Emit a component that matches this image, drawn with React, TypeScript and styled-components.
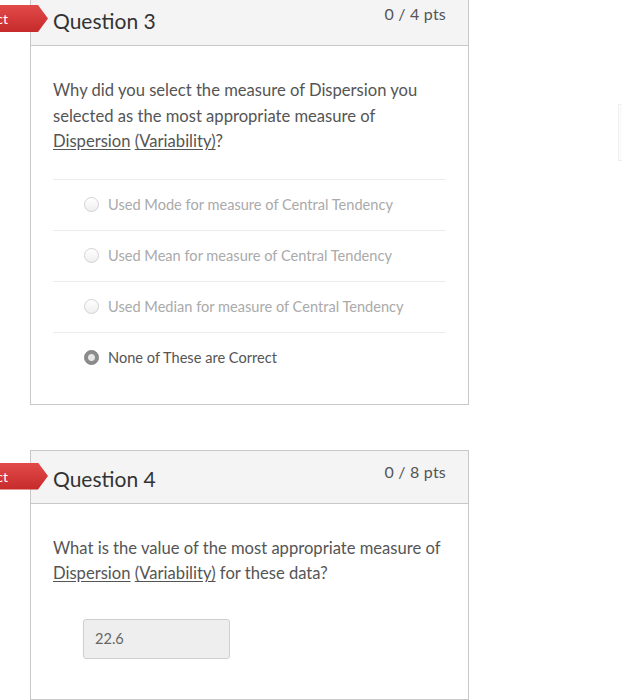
import React from "react";
import styled, { createGlobalStyle } from "styled-components";

const GlobalStyle = createGlobalStyle`
  html, body {
    margin: 0;
    padding: 0;
    background: #fff;
    font-family: Lato, "Open Sans", "Liberation Sans", sans-serif;
    color: #444;
  }
  * {
    box-sizing: border-box;
  }
`;

const Page = styled.div`
  display: flex;
  width: 626px;
  height: 700px;
  overflow: hidden;
`;

const Quiz = styled.div`
  display: flex;
  flex-direction: column;
  gap: 45px;
  margin-top: -8px;
  margin-left: 30px;
  width: 439px;
  flex: none;
`;

const Side = styled.div`
  width: 4px;
  height: 57px;
  margin: 104px 0 0 149px;
  border: 1px solid #f0f0f0;
  border-right: none;
  background: #fbfbfb;
`;

const Card = styled.div`
  position: relative;
  border: 1px solid #c8c8c8;
  background: #fff;
`;

const Header = styled.div`
  display: flex;
  justify-content: space-between;
  align-items: flex-start;
  height: 53px;
  padding: 11px 22px 0 22px;
  background: #f4f4f4;
  border-bottom: 1px solid #c8c8c8;
`;

const Title = styled.h2`
  margin: 4px 0 0 0;
  font-size: 21px;
  line-height: 26px;
  font-weight: 400;
  color: #333;
`;

const Points = styled.div`
  font-size: 16px;
  line-height: 20px;
  color: #555;
  letter-spacing: 0.2px;
`;

const Tag = styled.div`
  position: absolute;
  top: 12px;
  right: calc(100% - 17px);
  height: 27px;
  display: flex;
  align-items: center;
  padding: 0 40px 0 12px;
  font-size: 14px;
  color: #fff;
  background: linear-gradient(#e24a4a, #c62a2a);
  clip-path: polygon(0 0, calc(100% - 10px) 0, 100% 50%, calc(100% - 10px) 100%, 0 100%);
`;

const Body = styled.div<{ $bottom: number }>`
  padding: 32px 22px ${(p) => p.$bottom}px 22px;
`;

const Text = styled.div`
  font-size: 16.6px;
  line-height: 25.5px;
  color: #555;
`;

const Term = styled.span`
  text-decoration: underline;
  text-decoration-color: #555;
  text-underline-offset: 2px;
`;

const Answers = styled.div`
  display: flex;
  flex-direction: column;
  margin-top: 24px;
`;

const Answer = styled.div`
  display: flex;
  align-items: center;
  gap: 9px;
  height: 51px;
  padding-left: 31px;
  border-top: 1px solid #ececec;
`;

const Radio = styled.span<{ $checked?: boolean }>`
  width: 15px;
  height: 15px;
  border-radius: 50%;
  flex: none;
  ${(p) =>
    p.$checked
      ? `background: radial-gradient(circle, #e6e6e6 0 3px, #8c8c8c 4px);
         border: 1px solid #7e7e7e;`
      : `background: linear-gradient(#ffffff, #efefef);
         border: 1px solid #d2d2d2;`}
`;

const Label = styled.span<{ $checked?: boolean }>`
  font-size: 14.6px;
  color: ${(p) => (p.$checked ? "#555" : "#aaa")};
`;

const Field = styled.div`
  margin: 32px 0 0 30px;
  width: 147px;
  height: 40px;
  display: flex;
  align-items: center;
  padding-left: 11px;
  font-size: 14.6px;
  color: #666;
  background: #eeeeee;
  border: 1px solid #cfcfcf;
  border-radius: 3px;
`;

const answers = [
  { label: "Used Mode for measure of Central Tendency", checked: false },
  { label: "Used Mean for measure of Central Tendency", checked: false },
  { label: "Used Median for measure of Central Tendency", checked: false },
  { label: "None of These are Correct", checked: true },
];

export default function App() {
  return (
    <>
      <GlobalStyle />
      <Page>
        <Quiz>
          <Card>
            <Tag>Incorrect</Tag>
            <Header>
              <Title>Question 3</Title>
              <Points>0 / 4 pts</Points>
            </Header>
            <Body $bottom={21}>
              <Text>
                Why did you select the measure of Dispersion you selected as the most
                appropriate measure of <Term>Dispersion</Term> <Term>(Variability)</Term>?
              </Text>
              <Answers>
                {answers.map((a) => (
                  <Answer key={a.label}>
                    <Radio $checked={a.checked} />
                    <Label $checked={a.checked}>{a.label}</Label>
                  </Answer>
                ))}
              </Answers>
            </Body>
          </Card>
          <Card>
            <Tag>Incorrect</Tag>
            <Header>
              <Title>Question 4</Title>
              <Points>0 / 8 pts</Points>
            </Header>
            <Body $bottom={40}>
              <Text>
                What is the value of the most appropriate measure of{" "}
                <Term>Dispersion</Term> <Term>(Variability)</Term> for these data?
              </Text>
              <Field>22.6</Field>
            </Body>
          </Card>
        </Quiz>
        <Side />
      </Page>
    </>
  );
}
